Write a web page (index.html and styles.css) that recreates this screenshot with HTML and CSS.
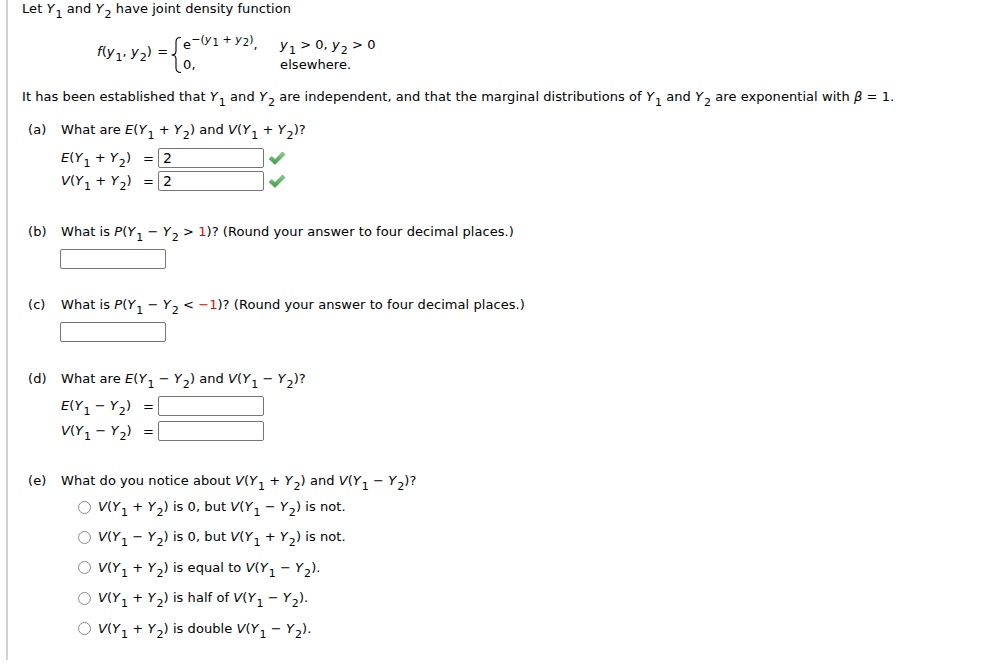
FILE: index.html
```html
<!DOCTYPE html>
<html>
<head>
<meta charset="utf-8">
<link rel="stylesheet" href="styles.css">
</head>
<body>
<div class="page">
  <div class="line">Let <i>Y</i><sub>1</sub> and <i>Y</i><sub>2</sub> have joint density function</div>

  <div class="formula">
    <div class="flhs"><i>f</i>(<i>y</i><sub>1</sub>, <i>y</i><sub>2</sub>) <span class="eq">=</span></div>
    <svg class="brace" width="12" height="38" viewBox="0 0 12 38"><path d="M11 1.5 C7 1.5 6 3 6 6 L6 15 C6 17.5 5 19 1.5 19 C5 19 6 20.5 6 23 L6 32 C6 35 7 36.5 11 36.5" fill="none" stroke="#000" stroke-width="1.1"/></svg>
    <div class="cases">
      <div class="case"><span class="c1">e<sup>−(<i>y</i><sub>1</sub> + <i>y</i><sub>2</sub>)</sup>,</span><span class="c2"><i>y</i><sub>1</sub> &gt; 0, <i>y</i><sub>2</sub> &gt; 0</span></div>
      <div class="case"><span class="c1">0,</span><span class="c2">elsewhere.</span></div>
    </div>
  </div>

  <div class="line intro">It has been established that <i>Y</i><sub>1</sub> and <i>Y</i><sub>2</sub> are independent, and that the marginal distributions of <i>Y</i><sub>1</sub> and <i>Y</i><sub>2</sub> are exponential with <i>β</i> = 1.</div>

  <div class="q qa"><span class="lbl">(a)</span><span>What are <i>E</i>(<i>Y</i><sub>1</sub> + <i>Y</i><sub>2</sub>) and <i>V</i>(<i>Y</i><sub>1</sub> + <i>Y</i><sub>2</sub>)?</span></div>
  <div class="arow first"><span class="alabel"><i>E</i>(<i>Y</i><sub>1</sub> + <i>Y</i><sub>2</sub>)</span><span class="aeq">=</span><span class="box">2</span>
    <svg class="check" width="18" height="15" viewBox="0 0 18 15"><defs><linearGradient id="g1" x1="0" y1="0" x2="0" y2="1"><stop offset="0" stop-color="#8fd08f"/><stop offset="1" stop-color="#3f9a45"/></linearGradient></defs><polygon points="1,8 4,5.5 7,8.5 14.5,1 17,3.5 7,13.5" fill="url(#g1)" stroke="#4e9e52" stroke-width="0.6"/></svg></div>
  <div class="arow"><span class="alabel"><i>V</i>(<i>Y</i><sub>1</sub> + <i>Y</i><sub>2</sub>)</span><span class="aeq">=</span><span class="box">2</span>
    <svg class="check" width="18" height="15" viewBox="0 0 18 15"><defs><linearGradient id="g2" x1="0" y1="0" x2="0" y2="1"><stop offset="0" stop-color="#8fd08f"/><stop offset="1" stop-color="#3f9a45"/></linearGradient></defs><polygon points="1,8 4,5.5 7,8.5 14.5,1 17,3.5 7,13.5" fill="url(#g2)" stroke="#4e9e52" stroke-width="0.6"/></svg></div>

  <div class="q qb"><span class="lbl">(b)</span><span>What is <i>P</i>(<i>Y</i><sub>1</sub> − <i>Y</i><sub>2</sub> &gt; <span class="red">1</span>)? (Round your answer to four decimal places.)</span></div>
  <div class="soloin"><span class="box"></span></div>

  <div class="q qc"><span class="lbl">(c)</span><span>What is <i>P</i>(<i>Y</i><sub>1</sub> − <i>Y</i><sub>2</sub> &lt; <span class="red">−1</span>)? (Round your answer to four decimal places.)</span></div>
  <div class="soloin"><span class="box"></span></div>

  <div class="q qd"><span class="lbl">(d)</span><span>What are <i>E</i>(<i>Y</i><sub>1</sub> − <i>Y</i><sub>2</sub>) and <i>V</i>(<i>Y</i><sub>1</sub> − <i>Y</i><sub>2</sub>)?</span></div>
  <div class="arow first"><span class="alabel"><i>E</i>(<i>Y</i><sub>1</sub> − <i>Y</i><sub>2</sub>)</span><span class="aeq">=</span><span class="box"></span></div>
  <div class="arow second"><span class="alabel"><i>V</i>(<i>Y</i><sub>1</sub> − <i>Y</i><sub>2</sub>)</span><span class="aeq">=</span><span class="box"></span></div>

  <div class="q qe"><span class="lbl">(e)</span><span>What do you notice about <i>V</i>(<i>Y</i><sub>1</sub> + <i>Y</i><sub>2</sub>) and <i>V</i>(<i>Y</i><sub>1</sub> − <i>Y</i><sub>2</sub>)?</span></div>
  <div class="opts">
    <div class="opt"><span class="radio"></span><span><i>V</i>(<i>Y</i><sub>1</sub> + <i>Y</i><sub>2</sub>) is 0, but <i>V</i>(<i>Y</i><sub>1</sub> − <i>Y</i><sub>2</sub>) is not.</span></div>
    <div class="opt"><span class="radio"></span><span><i>V</i>(<i>Y</i><sub>1</sub> − <i>Y</i><sub>2</sub>) is 0, but <i>V</i>(<i>Y</i><sub>1</sub> + <i>Y</i><sub>2</sub>) is not.</span></div>
    <div class="opt"><span class="radio"></span><span><i>V</i>(<i>Y</i><sub>1</sub> + <i>Y</i><sub>2</sub>) is equal to <i>V</i>(<i>Y</i><sub>1</sub> − <i>Y</i><sub>2</sub>).</span></div>
    <div class="opt"><span class="radio"></span><span><i>V</i>(<i>Y</i><sub>1</sub> + <i>Y</i><sub>2</sub>) is half of <i>V</i>(<i>Y</i><sub>1</sub> − <i>Y</i><sub>2</sub>).</span></div>
    <div class="opt"><span class="radio"></span><span><i>V</i>(<i>Y</i><sub>1</sub> + <i>Y</i><sub>2</sub>) is double <i>V</i>(<i>Y</i><sub>1</sub> − <i>Y</i><sub>2</sub>).</span></div>
  </div>
</div>
</body>
</html>
```

FILE: styles.css
```css
html, body {
  margin: 0;
  padding: 0;
  background: #fff;
}
body {
  font-family: "DejaVu Sans", Verdana, sans-serif;
  font-size: 13px;
  letter-spacing: 0.06px;
  color: #000;
}
.page {
  margin-left: 6px;
  border-left: 2px solid #d2d2d2;
  padding-left: 14px;
  height: 660px;
  box-sizing: border-box;
}
i { font-style: italic; }
sub {
  font-size: 11px;
  vertical-align: -5px;
  line-height: 0;
  margin-left: 1px;
}
sup {
  font-size: 11px;
  vertical-align: 6px;
  line-height: 0;
}
sup sub { font-size: 10px; vertical-align: -3px; }
.line {
  line-height: 18px;
  height: 18px;
  white-space: nowrap;
}
.formula {
  display: flex;
  align-items: center;
  margin-top: 16px;
  margin-left: 75px;
  height: 42px;
}
.flhs { line-height: 18px; margin-top: -6px; }
.eq { margin-left: 1px; }
.brace { margin-left: 2px; margin-right: 1px; }
.cases { display: flex; flex-direction: column; gap: 2px; }
.case { display: flex; line-height: 18px; height: 18px; }
.c1 { width: 97px; }
.intro { margin-top: 12px; }
.q {
  display: flex;
  line-height: 18px;
  height: 18px;
  white-space: nowrap;
  padding-left: 6px;
}
.lbl { width: 33px; }
.qa { margin-top: 15px; }
.qb { margin-top: 32px; }
.qc { margin-top: 27px; }
.qd { margin-top: 28px; }
.qe { margin-top: 31px; }
.red { color: #e00; }
.arow {
  display: flex;
  align-items: center;
  height: 20px;
  margin-top: 3px;
  padding-left: 39px;
}
.arow.first { margin-top: 9px; }
.qd + .arow.first { margin-top: 8px; }
.arow.second { margin-top: 5px; }
.alabel { width: 82px; white-space: nowrap; line-height: 18px; }
.aeq { width: 15px; }
.box {
  display: inline-block;
  box-sizing: border-box;
  width: 106px;
  height: 20px;
  border: 1px solid #767676;
  border-radius: 2px;
  line-height: 18px;
  padding-left: 4px;
  font-size: 14px;
}
.check { margin-left: 4px; }
.soloin {
  margin-top: 8px;
  padding-left: 38px;
  height: 20px;
}
.opts {
  margin-top: 8px;
  padding-left: 56px;
}
.opt {
  display: flex;
  align-items: center;
  height: 18px;
  line-height: 18px;
  margin-bottom: 12.4px;
  white-space: nowrap;
}
.radio {
  box-sizing: border-box;
  width: 13px;
  height: 13px;
  border: 1px solid #8a8a8a;
  border-radius: 50%;
  margin-right: 7px;
}
```
